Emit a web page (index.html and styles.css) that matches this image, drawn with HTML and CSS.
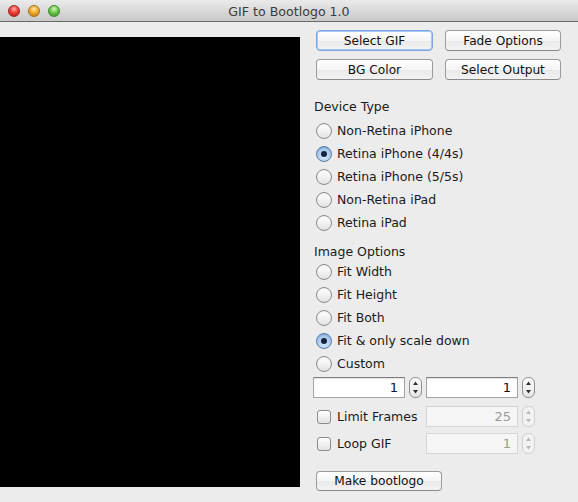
FILE: index.html
```html
<!DOCTYPE html>
<html>
<head>
<meta charset="utf-8">
<title>GIF to Bootlogo 1.0</title>
<link rel="stylesheet" href="styles.css">
</head>
<body>
<div class="window">
  <div class="titlebar">
    <div class="lights">
      <span class="light red"></span>
      <span class="light yellow"></span>
      <span class="light green"></span>
    </div>
    <div class="title">GIF to Bootlogo 1.0</div>
    <div></div>
  </div>
  <div class="content">
    <div class="preview"></div>
    <div class="panel">
      <div class="btn-grid">
        <button class="btn focused">Select GIF</button>
        <button class="btn">Fade Options</button>
        <button class="btn">BG Color</button>
        <button class="btn">Select Output</button>
      </div>

      <div class="section-label first">Device Type</div>
      <div class="radio-group gap-top">
        <div class="radio"><span class="circle"></span><span>Non-Retina iPhone</span></div>
        <div class="radio"><span class="circle on"></span><span>Retina iPhone (4/4s)</span></div>
        <div class="radio"><span class="circle"></span><span>Retina iPhone (5/5s)</span></div>
        <div class="radio"><span class="circle"></span><span>Non-Retina iPad</span></div>
        <div class="radio"><span class="circle"></span><span>Retina iPad</span></div>
      </div>

      <div class="section-label second">Image Options</div>
      <div class="radio-group">
        <div class="radio"><span class="circle"></span><span>Fit Width</span></div>
        <div class="radio"><span class="circle"></span><span>Fit Height</span></div>
        <div class="radio"><span class="circle"></span><span>Fit Both</span></div>
        <div class="radio"><span class="circle on"></span><span>Fit &amp; only scale down</span></div>
        <div class="radio"><span class="circle"></span><span>Custom</span></div>
      </div>

      <div class="spin-row">
        <div class="field">1</div>
        <svg class="stepper" width="13" height="21" viewBox="0 0 13 21"><defs><linearGradient id="sg" x1="0" y1="0" x2="0" y2="1"><stop offset="0" stop-color="#ffffff"/><stop offset="1" stop-color="#e4e4e4"/></linearGradient></defs><rect x="0.5" y="0.5" width="12" height="20" rx="5.5" fill="url(#sg)" stroke="#8e8e8e"/><polygon points="4,8 9,8 6.5,4.5" fill="#333"/><polygon points="4,13 9,13 6.5,16.5" fill="#333"/></svg>
        <div class="field">1</div>
        <svg class="stepper" width="13" height="21" viewBox="0 0 13 21"><rect x="0.5" y="0.5" width="12" height="20" rx="5.5" fill="url(#sg)" stroke="#8e8e8e"/><polygon points="4,8 9,8 6.5,4.5" fill="#333"/><polygon points="4,13 9,13 6.5,16.5" fill="#333"/></svg>
      </div>

      <div class="check-row first-check">
        <div class="check"><span class="box"></span><span>Limit Frames</span></div>
        <div class="field disabled">25</div>
        <svg class="stepper" width="13" height="21" viewBox="0 0 13 21"><rect x="0.5" y="0.5" width="12" height="20" rx="5.5" fill="#f2f2f2" stroke="#cfcfcf"/><polygon points="4,8 9,8 6.5,4.5" fill="#b8b8b8"/><polygon points="4,13 9,13 6.5,16.5" fill="#b8b8b8"/></svg>
      </div>

      <div class="check-row second-check">
        <div class="check"><span class="box"></span><span>Loop GIF</span></div>
        <div class="field disabled">1</div>
        <svg class="stepper" width="13" height="21" viewBox="0 0 13 21"><rect x="0.5" y="0.5" width="12" height="20" rx="5.5" fill="#f2f2f2" stroke="#cfcfcf"/><polygon points="4,8 9,8 6.5,4.5" fill="#b8b8b8"/><polygon points="4,13 9,13 6.5,16.5" fill="#b8b8b8"/></svg>
      </div>

      <button class="btn make">Make bootlogo</button>
    </div>
  </div>
</div>
</body>
</html>
```

FILE: styles.css
```css
html, body {
  margin: 0;
  padding: 0;
  background: #ececec;
}
body {
  font-family: "DejaVu Sans", "Liberation Sans", sans-serif;
  font-size: 12.5px;
  color: #1a1a1a;
}
.window {
  width: 578px;
  height: 502px;
  background: #ececec;
  overflow: hidden;
}
.titlebar {
  height: 21px;
  border-bottom: 1px solid #6a6a6a;
  background: linear-gradient(#ebebeb, #d6d6d6 60%, #c9c9c9);
  display: grid;
  grid-template-columns: 1fr auto 1fr;
  align-items: center;
}
.lights {
  display: flex;
  gap: 8px;
  padding-left: 8px;
  align-items: center;
}
.light {
  width: 12px;
  height: 12px;
  border-radius: 50%;
  box-sizing: border-box;
}
.red {
  background: radial-gradient(circle at 50% 30%, #ffb3a8 0, #f0403a 45%, #b3140f 100%);
  border: 1px solid #9a2a25;
}
.yellow {
  background: radial-gradient(circle at 50% 30%, #ffe7a4 0, #f2ad2b 45%, #b9760d 100%);
  border: 1px solid #a1701c;
}
.green {
  background: radial-gradient(circle at 50% 30%, #d8f7b9 0, #6cc94c 45%, #2f8a1c 100%);
  border: 1px solid #3f8a2c;
}
.title {
  font-size: 12.6px;
  color: #3b3b3b;
  padding-top: 1px;
}
.content {
  display: flex;
}
.preview {
  width: 300px;
  height: 450px;
  margin-top: 15px;
  background: #000;
  flex: none;
}
.panel {
  display: flex;
  flex-direction: column;
  padding-left: 13px;
  padding-top: 8px;
}
.btn-grid {
  display: grid;
  grid-template-columns: 117px 116px;
  grid-auto-rows: 21px;
  column-gap: 12px;
  row-gap: 8px;
  margin-left: 3px;
}
.btn {
  font-family: "DejaVu Sans", "Liberation Sans", sans-serif;
  font-size: 12.2px;
  color: #111;
  background: linear-gradient(#ffffff, #f4f4f4 50%, #e9e9e9 51%, #f3f3f3);
  border: 1px solid #9b9b9b;
  border-bottom-color: #8a8a8a;
  border-radius: 4px;
  padding: 1px 0 0 0;
  margin: 0;
  height: 21px;
  line-height: 18px;
  box-sizing: border-box;
}
.btn.focused {
  border: 1px solid #78a6e2;
  box-shadow: inset 0 0 0 1px #a9c8ef;
}
.section-label {
  height: 18px;
  line-height: 18px;
  padding-top: 1px;
  box-sizing: border-box;
  margin-left: 1px;
}
.section-label.first {
  margin-top: 17px;
}
.section-label.second {
  margin-top: 8px;
}
.radio-group {
  display: flex;
  flex-direction: column;
}
.radio-group.gap-top {
  margin-top: 4px;
}
.radio {
  height: 23px;
  display: flex;
  align-items: center;
  gap: 5px;
  margin-left: 3px;
}
.circle {
  width: 16px;
  height: 16px;
  border-radius: 50%;
  box-sizing: border-box;
  border: 1px solid #8c8c8c;
  background: linear-gradient(#ffffff, #f2f2f2 50%, #e2e2e2);
  box-shadow: inset 0 1px 1px rgba(0,0,0,0.08);
  flex: none;
  position: relative;
}
.circle.on {
  border-color: #5a7da8;
  background: radial-gradient(circle at 50% 70%, #d7e8fb 0, #a7c8ee 60%, #7aa6da 100%);
}
.circle.on::after {
  content: "";
  position: absolute;
  width: 6px;
  height: 6px;
  border-radius: 50%;
  background: #14253c;
  left: 4px;
  top: 4px;
}
.spin-row {
  display: flex;
  gap: 4px;
  margin-top: 2px;
  height: 21px;
}
.field {
  width: 92px;
  height: 21px;
  box-sizing: border-box;
  background: #fff;
  border: 1px solid #a4a4a4;
  border-top-color: #7e7e7e;
  box-shadow: inset 0 1px 1px rgba(0,0,0,0.12);
  text-align: right;
  padding-right: 6px;
  line-height: 19px;
  font-size: 13px;
  color: #111;
}
.field.disabled {
  background: #f5f5f5;
  border: 1px solid #d6d6d6;
  box-shadow: none;
  color: #999;
}
.stepper {
  display: block;
  flex: none;
}
.check-row {
  display: flex;
  gap: 4px;
  height: 21px;
  align-items: center;
}
.first-check {
  margin-top: 8px;
}
.second-check {
  margin-top: 6px;
}
.check {
  display: flex;
  align-items: center;
  gap: 6px;
  padding-left: 4px;
  box-sizing: border-box;
  width: 113px;
  margin-right: -4px;
}
.box {
  width: 14px;
  height: 14px;
  box-sizing: border-box;
  border: 1px solid #8c8c8c;
  border-radius: 3px;
  background: linear-gradient(#ffffff, #f0f0f0 50%, #e3e3e3);
  flex: none;
}
.btn.make {
  width: 126px;
  height: 20px;
  line-height: 17px;
  margin-top: 17px;
  margin-left: 3px;
}
```
